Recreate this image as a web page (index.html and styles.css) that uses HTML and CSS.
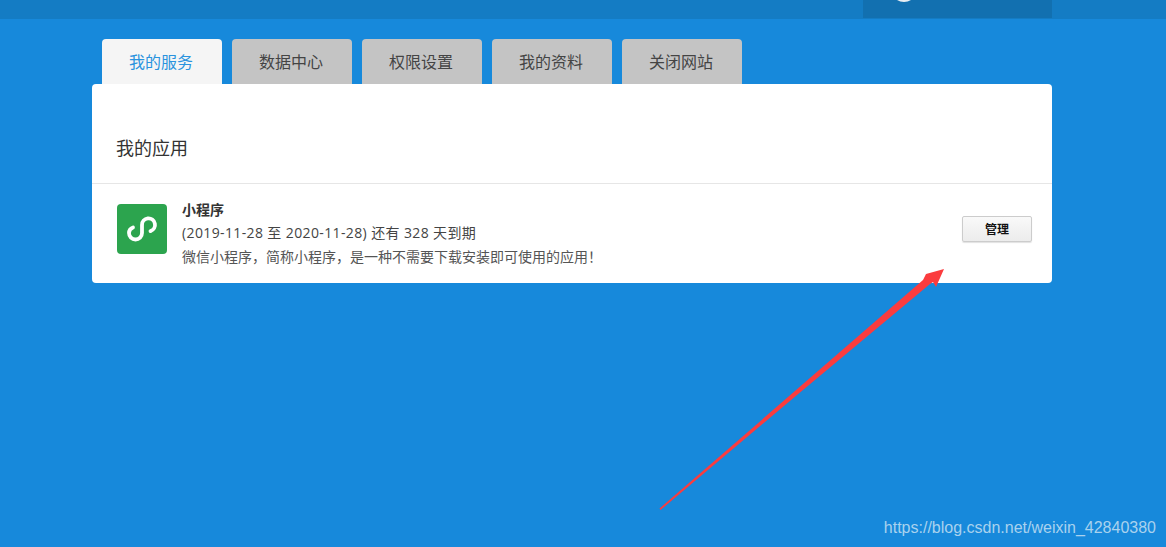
FILE: index.html
```html
<!DOCTYPE html>
<html lang="zh-CN">
<head>
<meta charset="utf-8">
<title>我的服务</title>
<link rel="stylesheet" href="styles.css">
</head>
<body>
<header class="topbar">
  <div class="topbar-inner">
    <div class="user"><span class="avatar"></span></div>
  </div>
</header>
<main class="wrap">
  <nav class="tabs">
    <a class="tab active">我的服务</a>
    <a class="tab">数据中心</a>
    <a class="tab">权限设置</a>
    <a class="tab">我的资料</a>
    <a class="tab">关闭网站</a>
  </nav>
  <section class="card">
    <h2 class="card-title">我的应用</h2>
    <div class="app">
      <div class="app-icon">
        <svg viewBox="0 0 50 50" width="50" height="50">
          <path d="M16 23.500C13.500 24.500 12 26.500 12 29a6.500 6.500 0 0 0 13 0v-8a6.500 6.500 0 1 1 8.500 6.100" fill="none" stroke="#fff" stroke-width="3.800" stroke-linecap="round"/>
        </svg>
      </div>
      <div class="app-info">
        <div class="app-name">小程序</div>
        <div class="app-date">(2019-11-28 至 2020-11-28) 还有 328 天到期</div>
        <div class="app-desc">微信小程序，简称小程序，是一种不需要下载安装即可使用的应用！</div>
      </div>
      <button class="manage">管理</button>
    </div>
  </section>
</main>
<svg class="arrow" viewBox="0 0 1166 547" width="1166" height="547">
  <path d="M659.500 508.500 L923 280 L926 274 L944 269 L936 287 L933 282 L930 284 L800 392.500 L660.500 510 Z" fill="#fb3c3e"/>
</svg>
<div class="watermark">https://blog.csdn.net/weixin_42840380</div>
</body>
</html>
```
FILE: styles.css
```css
* { box-sizing: border-box; }
html, body { margin: 0; height: 100%; }
body {
  position: relative;
  height: 547px;
  overflow: hidden;
  background: #1789db;
  font-family: "Open Sans", "Noto Sans CJK SC", sans-serif;
  color: #333;
}
.topbar {
  height: 19px;
  background: #147cc4;
}
.topbar-inner {
  width: 960px;
  height: 19px;
  margin-left: 92px;
  display: flex;
  justify-content: flex-end;
}
.user {
  width: 189px;
  height: 18px;
  background: #1270b0;
  overflow: hidden;
  padding-left: 28px;
}
.avatar {
  display: block;
  width: 26px;
  height: 26px;
  margin-top: -24px;
  border-radius: 50%;
  background: #e8eef3;
}
.wrap {
  width: 960px;
  margin: 20px 0 0 92px;
}
.tabs {
  display: flex;
  gap: 10px;
  padding-left: 10px;
}
.tab {
  width: 120px;
  height: 45px;
  padding-right: 2px;
  border-radius: 4px 4px 0 0;
  background: #c4c4c4;
  color: #444;
  font-size: 16px;
  line-height: 47px;
  text-align: center;
}
.tab.active {
  background: #f5f5f5;
  color: #2a93de;
}
.card {
  height: 199px;
  background: #fff;
  border-radius: 4px;
}
.card-title {
  height: 100px;
  margin: 0;
  padding: 49px 24px 0;
  border-bottom: 1px solid #e6e6e6;
  font-size: 18px;
  font-weight: 400;
  line-height: 30px;
  color: #333;
}
.app {
  display: flex;
  align-items: flex-start;
  padding: 20px 20px 0 25px;
}
.app-icon {
  flex: none;
  width: 50px;
  height: 50px;
  border-radius: 4px;
  background: #2ca44e;
  display: flex;
}
.app-info {
  flex: 1;
  margin-left: 15px;
  margin-top: -4px;
}
.app-name {
  font-size: 14px;
  font-weight: 700;
  line-height: 20px;
  color: #333;
}
.app-date {
  font-size: 14px;
  letter-spacing: .38px;
  line-height: 26px;
  color: #444;
}
.app-desc {
  font-size: 14px;
  line-height: 21px;
  color: #555;
}
.manage {
  flex: none;
  width: 70px;
  height: 26px;
  margin-top: 12px;
  padding: 0;
  border: 1px solid #ccc;
  border-radius: 2px;
  background: linear-gradient(#f9f9f9, #ececec);
  box-shadow: 0 1px 1px rgba(0, 0, 0, .12);
  font-family: inherit;
  font-size: 12px;
  font-weight: 700;
  color: #111;
}
.arrow {
  position: absolute;
  left: 0;
  top: 0;
  pointer-events: none;
}
.watermark {
  position: absolute;
  right: 10px;
  top: 517px;
  font-family: "Liberation Sans", sans-serif;
  font-size: 16px;
  line-height: 22px;
  color: #a9d2ee;
}
```
